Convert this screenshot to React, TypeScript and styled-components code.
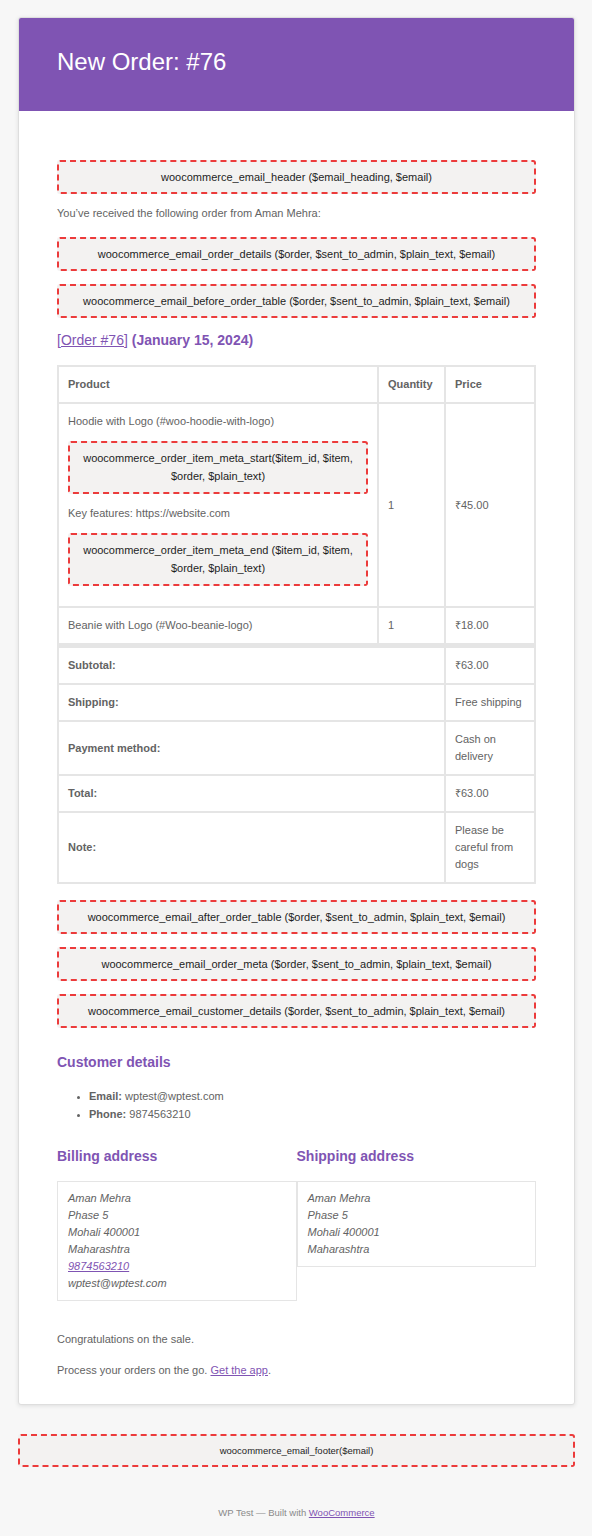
import React from 'react';
import styled, {createGlobalStyle, css} from 'styled-components';

const purple = '#7f54b3';
const text = '#636363';
const line = '#e5e5e5';

const GlobalStyle = createGlobalStyle`
	html, body {
		margin: 0;
		padding: 0;
		background: #f7f7f7;
	}
	body {
		font-family: "Liberation Sans", Arial, Helvetica, sans-serif;
		color: ${text};
	}
`;

const Page = styled.div`
	padding: 17px 17px 16px 18px;
`;

const Card = styled.div`
	background: #fff;
	border: 1px solid #dedede;
	border-radius: 3px;
	box-shadow: 0 1px 4px rgba(0, 0, 0, 0.1);
	overflow: hidden;
`;

const Header = styled.div`
	background: ${purple};
	padding: 29px 38px 34px;
`;

const Heading = styled.h1`
	margin: 0;
	font-size: 24px;
	font-weight: 400;
	line-height: 30px;
	color: #fff;
`;

const Body = styled.div`
	padding: 49px 38px 25px;
`;

const Hook = styled.div<{$nested?: boolean; $small?: boolean}>`
	border: 2px dashed #ec3b3b;
	border-radius: 3px;
	background: #f3f2f1;
	color: #1e1e1e;
	text-align: center;
	font-size: 11px;
	line-height: 16px;
	padding: 7px 10px;
	margin-bottom: 13px;
	${({$nested}) =>
		$nested &&
		css`
			line-height: 17.5px;
			padding: 7px 10px;
			margin: 11px 0;
		`};
	${({$small}) =>
		$small &&
		css`
			font-size: 9.5px;
			line-height: 13px;
			padding: 8px 10px;
			margin: 0;
		`};
`;

const Para = styled.p<{$gap?: number}>`
	margin: 0 0 ${({$gap}) => $gap ?? 14}px;
	font-size: 11px;
	line-height: 17px;
`;

const Intro = styled(Para)`
	margin-top: -2px;
	margin-bottom: 15px;
`;

const Link = styled.a`
	color: ${purple};
	font-weight: 400;
	text-decoration: underline;
`;

const SectionTitle = styled.h2<{$top?: number}>`
	margin: ${({$top}) => $top ?? 0}px 0 16px;
	font-size: 14px;
	line-height: 18px;
	font-weight: 700;
	color: ${purple};
`;

const Table = styled.table`
	width: 100%;
	table-layout: fixed;
	border-collapse: separate;
	border-spacing: 0;
	border: 1px solid ${line};
	font-size: 11px;
	line-height: 17px;
	color: ${text};
	margin: 15px 0 16px;
`;

const Cell = styled.td<{$head?: boolean; $thick?: boolean}>`
	border: 1px solid ${line};
	padding: 9px;
	text-align: left;
	vertical-align: middle;
	font-weight: ${({$head}) => ($head ? 700 : 400)};
	${({$thick}) =>
		$thick &&
		css`
			border-top-width: 4px;
		`};
`;

const ProductLine = styled.div``;

const List = styled.ul`
	margin: 0 0 24px;
	padding-left: 32px;
	font-size: 11px;
	line-height: 18px;
	li::marker {
		font-size: 9px;
	}
`;

const Addresses = styled.div`
	display: grid;
	grid-template-columns: 1fr 1fr;
	align-items: start;
	margin-bottom: 30px;
`;

const Address = styled.address`
	border: 1px solid ${line};
	padding: 8px 10px;
	font-style: italic;
	font-size: 11px;
	line-height: 17px;
	color: ${text};
`;

const Footer = styled.div`
	margin-top: 29px;
`;

const Credit = styled.p`
	margin: 39px 0 0;
	text-align: center;
	font-size: 9.5px;
	line-height: 14px;
	color: #8a8a8a;
`;

const hookArgs = '($order, $sent_to_admin, $plain_text, $email)';

const totals: [string, React.ReactNode][] = [
	['Subtotal:', '₹63.00'],
	['Shipping:', 'Free shipping'],
	['Payment method:', 'Cash on delivery'],
	['Total:', '₹63.00'],
	['Note:', 'Please be careful from dogs'],
];

export default function App() {
	return (
		<Page>
			<GlobalStyle />
			<Card>
				<Header>
					<Heading>New Order: #76</Heading>
				</Header>
				<Body>
					<Hook>woocommerce_email_header ($email_heading, $email)</Hook>
					<Intro>You’ve received the following order from Aman Mehra:</Intro>
					<Hook>woocommerce_email_order_details {hookArgs}</Hook>
					<Hook>woocommerce_email_before_order_table {hookArgs}</Hook>
					<SectionTitle>
						<Link href="#">[Order #76]</Link> (January 15, 2024)
					</SectionTitle>
					<Table>
						<colgroup>
							<col style={{width: 320}} />
							<col style={{width: 67}} />
							<col />
						</colgroup>
						<thead>
							<tr>
								<Cell as="th" $head>Product</Cell>
								<Cell as="th" $head>Quantity</Cell>
								<Cell as="th" $head>Price</Cell>
							</tr>
						</thead>
						<tbody>
							<tr>
								<Cell>
									<ProductLine>Hoodie with Logo (#woo-hoodie-with-logo)</ProductLine>
									<Hook $nested>
										woocommerce_order_item_meta_start($item_id, $item, $order, $plain_text)
									</Hook>
									<ProductLine>Key features: https://website.com</ProductLine>
									<Hook $nested>
										woocommerce_order_item_meta_end ($item_id, $item, $order, $plain_text)
									</Hook>
								</Cell>
								<Cell>1</Cell>
								<Cell>₹45.00</Cell>
							</tr>
							<tr>
								<Cell>Beanie with Logo (#Woo-beanie-logo)</Cell>
								<Cell>1</Cell>
								<Cell>₹18.00</Cell>
							</tr>
						</tbody>
						<tfoot>
							{totals.map(([label, value], i) => (
								<tr key={label}>
									<Cell as="th" $head $thick={i === 0} colSpan={2}>
										{label}
									</Cell>
									<Cell $thick={i === 0}>{value}</Cell>
								</tr>
							))}
						</tfoot>
					</Table>
					<Hook>woocommerce_email_after_order_table {hookArgs}</Hook>
					<Hook>woocommerce_email_order_meta {hookArgs}</Hook>
					<Hook>woocommerce_email_customer_details {hookArgs}</Hook>
					<SectionTitle $top={25}>Customer details</SectionTitle>
					<List>
						<li>
							<strong>Email:</strong> wptest@wptest.com
						</li>
						<li>
							<strong>Phone:</strong> 9874563210
						</li>
					</List>
					<Addresses>
						<div>
							<SectionTitle>Billing address</SectionTitle>
							<Address>
								Aman Mehra
								<br />
								Phase 5
								<br />
								Mohali 400001
								<br />
								Maharashtra
								<br />
								<Link href="#">9874563210</Link>
								<br />
								wptest@wptest.com
							</Address>
						</div>
						<div>
							<SectionTitle>Shipping address</SectionTitle>
							<Address>
								Aman Mehra
								<br />
								Phase 5
								<br />
								Mohali 400001
								<br />
								Maharashtra
							</Address>
						</div>
					</Addresses>
					<Para>Congratulations on the sale.</Para>
					<Para $gap={0}>
						Process your orders on the go. <Link href="#">Get the app</Link>.
					</Para>
				</Body>
			</Card>
			<Footer>
				<Hook $small>woocommerce_email_footer($email)</Hook>
				<Credit>
					WP Test — Built with <Link href="#">WooCommerce</Link>
				</Credit>
			</Footer>
		</Page>
	);
}
